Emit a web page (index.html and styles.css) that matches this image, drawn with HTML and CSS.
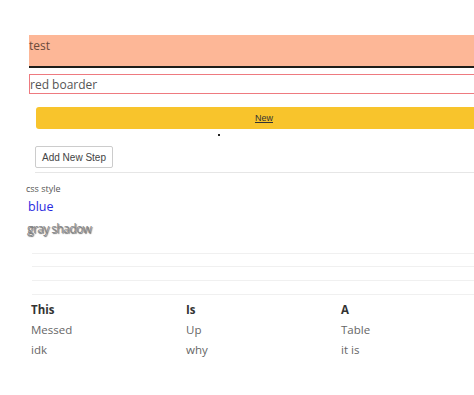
FILE: index.html
```html
<!DOCTYPE html>
<html lang="en">

<head>
  <title>steps</title>
  <meta name="viewport" content="width=device-width, initial-scale=1" />
  <meta charset="UTF-8" />
  <link rel="stylesheet" href="styles.css">
</head>

<body>
  <div class="test">test</div>
  <div class="red-border">red boarder</div>
  <div class="new-bar"><a href="#">New</a></div>
  <div class="dot-row"><span class="dot"></span></div>
  <button class="add-step">Add New Step</button>
  <div class="divider"></div>
  <p class="label">css style</p>
  <p class="blue">blue</p>
  <p class="shadow">gray shadow</p>
  <div class="rules">
    <div class="rule"></div>
    <div class="rule"></div>
    <div class="rule"></div>
    <div class="rule"></div>
  </div>
  <table class="messy">
    <tr><th>This</th><th>Is</th><th>A</th></tr>
    <tr><td>Messed</td><td>Up</td><td>Table</td></tr>
    <tr><td>idk</td><td>why</td><td>it is</td></tr>
  </table>
</body>

</html>
```

FILE: styles.css
```css
body {
  margin: 0;
  background-color: #fff;
  color: #555;
  font-family: 'Open Sans', sans-serif;
  font-size: 12px;
  overflow: hidden;
}

.test {
  margin: 35px 0 0 29px;
  height: 33px;
  padding-top: 2px;
  background-color: #fdb797;
  border-bottom: 2px solid #1e1e1a;
  color: #6a4a3a;
  box-sizing: border-box;
}

.red-border {
  margin: 6px 0 0 29px;
  height: 20px;
  padding-top: 1px;
  line-height: 18px;
  border: 1px solid #ee7a80;
  border-right: none;
  box-sizing: border-box;
  color: #555;
}

.new-bar {
  margin: 13px 0 0 36px;
  width: 456px;
  height: 22px;
  line-height: 22px;
  background-color: #f8c42c;
  border-radius: 3px;
  text-align: center;
  font-family: 'Liberation Sans', Arial, sans-serif;
  font-size: 9px;
}

.new-bar a {
  color: #333;
  text-decoration: underline;
}

.dot-row {
  height: 17px;
  position: relative;
}

.dot {
  position: absolute;
  left: 218px;
  top: 5px;
  width: 2px;
  height: 2px;
  background-color: #222;
}

.add-step {
  display: block;
  margin-left: 35px;
  width: 78px;
  height: 22px;
  padding: 0;
  background-color: #fff;
  border: 1px solid #ccc;
  border-radius: 2px;
  color: #444;
  font-family: 'Liberation Sans', Arial, sans-serif;
  font-size: 10px;
}

.divider {
  margin: 4px 0 0 35px;
  border-top: 1px solid #e6e6e6;
}

.label {
  margin: 10px 0 0 26px;
  font-size: 9px;
  line-height: 12px;
  color: #555;
}

.blue {
  margin: 4px 0 0 28px;
  font-size: 12.5px;
  line-height: 16px;
  color: #2a2ae0;
}

.shadow {
  margin: 6px 0 0 27px;
  font-size: 12px;
  line-height: 16px;
  color: #888;
  letter-spacing: -0.6px;
  text-shadow: 1px 1px 1px #666;
}

.rules {
  margin: 16px 0 0 32px;
}

.rule {
  height: 12px;
  border-top: 1px solid #f0f0f0;
}

.rule:nth-child(2), .rule:nth-child(3) {
  height: 13px;
}

.rule:last-child {
  height: 4px;
}

.messy {
  margin: 0 0 0 27px;
  border-collapse: collapse;
  table-layout: fixed;
  width: 465px;
}

.messy th, .messy td {
  text-align: left;
  padding: 2px 4px;
  height: 16px;
  width: 147px;
  font-size: 11.5px;
  color: #666;
}

.messy th {
  color: #333;
  font-weight: bold;
}
```
